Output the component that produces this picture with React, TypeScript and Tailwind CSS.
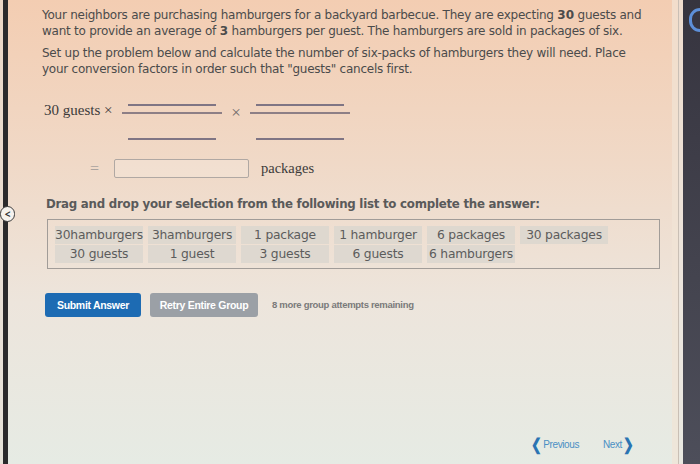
// Unit-conversion question card: problem text, fraction setup, answer box,
// drag-and-drop chip bank and the submit / retry row.

const CHIPS_TOP = ["30hamburgers", "3hamburgers", "1 package", "1 hamburger", "6 packages", "30 packages"];
const CHIPS_BOTTOM = ["30 guests", "1 guest", "3 guests", "6 guests", "6 hamburgers"];

const sans = "font-['DejaVu_Sans',sans-serif]";
const serif = "font-['Liberation_Serif',serif]";

function Fraction() {
  return (
    <div className="flex flex-col items-center w-[100px]">
      <div className="w-[88px] h-[15px] border-b-2 border-[#7f7584]" />
      <div className="w-full h-[2px] bg-[#8d7f86] mt-[6px]" />
      <div className="w-[88px] h-[26px] border-b-2 border-[#7f7584]" />
    </div>
  );
}

function Chip({ label }: { label: string }) {
  return (
    <div className="h-[18px] bg-[#dad6ce]/80 flex items-center justify-center text-[12.3px] text-[#5c5c5c] leading-none whitespace-nowrap tracking-[-0.2px]">
      {label}
    </div>
  );
}

export default function App() {
  return (
    <div className="w-[700px] h-[464px] flex overflow-hidden bg-[linear-gradient(180deg,#f3cdb2_0%,#f0d9c7_35%,#ede5dc_65%,#e6ebe4_100%)]">
      {/* left frame line */}
      <div className="relative w-[10px] flex shrink-0">
        <div className="w-[3px] bg-[#e6dcd2]/60" />
        <div className="w-[5px] bg-[#2b2a2c]" />
        <div className="absolute left-0 top-[206px] w-[15px] h-[16px] rounded-full bg-[#f6f2ee] border-[1.5px] border-[#3a3a3a] flex items-center justify-center text-[10px] font-bold text-[#333] leading-none">
          &lt;
        </div>
      </div>

      {/* main */}
      <div className={`flex-1 flex flex-col pl-[32px] pt-[7px] ${sans} text-[#4b4b4b]`}>
        <div className="text-[12px] leading-[16px] tracking-[-0.25px] whitespace-nowrap">
          <p>
            Your neighbors are purchasing hamburgers for a backyard barbecue. They are expecting{" "}
            <span className="font-bold tracking-normal">30</span> guests and
          </p>
          <p>
            want to provide an average of <span className="font-bold tracking-normal">3</span> hamburgers per
            guest. The hamburgers are sold in packages of six.
          </p>
          <p className="mt-[6px]">
            Set up the problem below and calculate the number of six-packs of hamburgers they will need. Place
          </p>
          <p>your conversion factors in order such that "guests" cancels first.</p>
        </div>

        {/* equation */}
        <div className={`flex items-start mt-[14px] ml-[2px] ${serif} text-[#3c3a3a]`}>
          <div className="mt-[9px] text-[15px] leading-[20px] w-[78px] whitespace-nowrap">30 guests ×</div>
          <Fraction />
          <div className="mt-[12px] w-[28px] text-center text-[17px] leading-[20px] text-[#6e6a6a]">×</div>
          <Fraction />
        </div>

        <div className={`flex items-center mt-[18px] ml-[48px] ${serif}`}>
          <span className="text-[16px] text-[#aaa39f] w-[24px] leading-none">=</span>
          <div className="w-[135px] h-[19px] border border-[#b0a8a3] rounded-[2px] bg-[#f6e9df]/40" />
          <span className="ml-[12px] text-[14.5px] text-[#3c3a3a]">packages</span>
        </div>

        <div className="mt-[16px] ml-[4px] text-[11.8px] font-bold tracking-[-0.25px] text-[#5a5a5a]">
          Drag and drop your selection from the following list to complete the answer:
        </div>

        <div className="mt-[6px] ml-[5px] w-[613px] border border-[#a19c98] pt-[6px] pb-[5px] pl-[7px]">
          <div className="grid grid-cols-[repeat(6,88px)] gap-x-[5px] gap-y-[1px]">
            {CHIPS_TOP.map((c) => (
              <Chip key={c} label={c} />
            ))}
            {CHIPS_BOTTOM.map((c) => (
              <Chip key={c} label={c} />
            ))}
          </div>
        </div>

        <div className="flex items-center mt-[24px] ml-[3px] font-['Liberation_Sans',sans-serif]">
          <button className="w-[96px] h-[24px] rounded-[3px] bg-[#1d6bb3] text-white text-[10.5px] font-bold tracking-[-0.3px]">
            Submit Answer
          </button>
          <button className="ml-[9px] w-[108px] h-[24px] rounded-[3px] bg-[#9ba0a6] text-white text-[10.5px] font-bold tracking-[-0.3px]">
            Retry Entire Group
          </button>
          <span className="ml-[14px] text-[9.5px] font-bold text-[#7a7a7a] tracking-[-0.3px]">
            8 more group attempts remaining
          </span>
        </div>

        <div className="flex-1" />
        <div className="flex items-center justify-end pr-[38px] pb-[12px] font-['Liberation_Sans',sans-serif] text-[10px] text-[#4a8fc4]">
          <span className="text-[13px] font-bold text-[#2b74b2] leading-none scale-y-125">❮</span>
          <span className="ml-[1px] tracking-[-0.4px]">Previous</span>
          <span className="ml-[24px] tracking-[-0.4px]">Next</span>
          <span className="ml-[1px] text-[13px] font-bold text-[#2b74b2] leading-none scale-y-125">❯</span>
        </div>
      </div>

      {/* right frame */}
      <div className="w-[11px] shrink-0 flex">
        <div className="w-[6px] bg-[#f1e4d6]/70" />
        <div className="w-px bg-[#c9bfb5]" />
        <div className="w-[4px] bg-[#ebe6df]/60" />
      </div>
      <div className="relative w-[17px] shrink-0 bg-[linear-gradient(180deg,#36343f,#44444f_60%,#4d4e5a)]">
        <div className="absolute left-[6px] top-[8px] w-[22px] h-[24px] rounded-full border-[3px] border-[#5d8fd8]" />
      </div>
    </div>
  );
}
